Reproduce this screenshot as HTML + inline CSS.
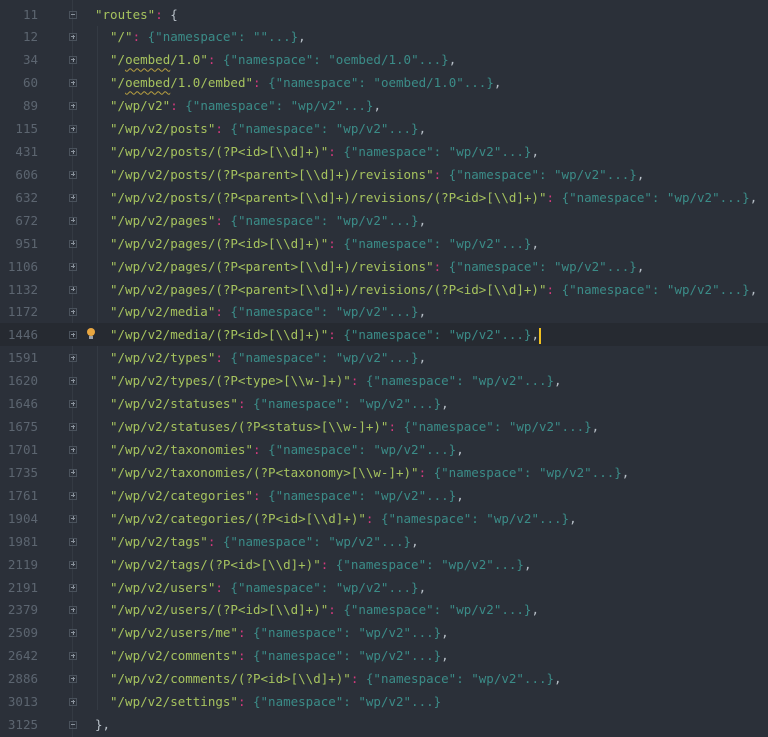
<!DOCTYPE html>
<html><head><meta charset="utf-8"><style>
html,body{margin:0;padding:0;background:#2b3039;width:768px;height:737px;overflow:hidden}
body{position:relative;font-family:"DejaVu Sans Mono","Liberation Mono",monospace;font-size:12.5px}
#w{position:absolute;left:0;top:2.5px;width:768px}
.l{position:relative;width:768px;height:22.935px;line-height:23px;white-space:pre}
.cur{background:#262a31}
.n{position:absolute;left:0;width:38px;text-align:right;color:#5c6570}
.f{position:absolute;left:69px;top:8px;width:8px;height:8px;border:1px solid #4a525c;box-sizing:border-box}
.f:before{content:"";position:absolute;left:1px;top:2px;width:4px;height:1px;background:#8a929c}
.f:after{content:"";position:absolute;left:2.5px;top:0.5px;width:1px;height:4px;background:#8a929c}
.m:after{display:none}
.t{position:absolute;left:110px;color:#a6c35e}
.s{color:#a6c35e}.c{color:#d1397c}.g{color:#3b8c88}.p{color:#b8c0c8}
.guide{position:absolute;left:97px;top:26px;width:1px;height:684px;background:#343a43}
.vg{position:absolute;left:72px;top:0;width:1px;height:737px;background:#343a43}
u{text-decoration:underline wavy #b8a040;text-underline-offset:3px;text-decoration-thickness:1px}
</style></head><body>
<div class="vg"></div>
<div class="guide"></div>
<div id="w">
<div class="l"><span class="n">11</span><span class="f m"></span><span class="t" style="left:95px"><span class="s">"routes"</span><span class="c">:</span> <span class="p">{</span></span></div>
<div class="l"><span class="n">12</span><span class="f"></span><span class="t">"/"<span class="c">:</span> <span class="g">{"namespace": ""...}</span><span class="p">,</span></span></div>
<div class="l"><span class="n">34</span><span class="f"></span><span class="t">"/<u>oembed</u>/1.0"<span class="c">:</span> <span class="g">{"namespace": "oembed/1.0"...}</span><span class="p">,</span></span></div>
<div class="l"><span class="n">60</span><span class="f"></span><span class="t">"/<u>oembed</u>/1.0/embed"<span class="c">:</span> <span class="g">{"namespace": "oembed/1.0"...}</span><span class="p">,</span></span></div>
<div class="l"><span class="n">89</span><span class="f"></span><span class="t">"/wp/v2"<span class="c">:</span> <span class="g">{"namespace": "wp/v2"...}</span><span class="p">,</span></span></div>
<div class="l"><span class="n">115</span><span class="f"></span><span class="t">"/wp/v2/posts"<span class="c">:</span> <span class="g">{"namespace": "wp/v2"...}</span><span class="p">,</span></span></div>
<div class="l"><span class="n">431</span><span class="f"></span><span class="t">"/wp/v2/posts/(?P&lt;id&gt;[\\d]+)"<span class="c">:</span> <span class="g">{"namespace": "wp/v2"...}</span><span class="p">,</span></span></div>
<div class="l"><span class="n">606</span><span class="f"></span><span class="t">"/wp/v2/posts/(?P&lt;parent&gt;[\\d]+)/revisions"<span class="c">:</span> <span class="g">{"namespace": "wp/v2"...}</span><span class="p">,</span></span></div>
<div class="l"><span class="n">632</span><span class="f"></span><span class="t">"/wp/v2/posts/(?P&lt;parent&gt;[\\d]+)/revisions/(?P&lt;id&gt;[\\d]+)"<span class="c">:</span> <span class="g">{"namespace": "wp/v2"...}</span><span class="p">,</span></span></div>
<div class="l"><span class="n">672</span><span class="f"></span><span class="t">"/wp/v2/pages"<span class="c">:</span> <span class="g">{"namespace": "wp/v2"...}</span><span class="p">,</span></span></div>
<div class="l"><span class="n">951</span><span class="f"></span><span class="t">"/wp/v2/pages/(?P&lt;id&gt;[\\d]+)"<span class="c">:</span> <span class="g">{"namespace": "wp/v2"...}</span><span class="p">,</span></span></div>
<div class="l"><span class="n">1106</span><span class="f"></span><span class="t">"/wp/v2/pages/(?P&lt;parent&gt;[\\d]+)/revisions"<span class="c">:</span> <span class="g">{"namespace": "wp/v2"...}</span><span class="p">,</span></span></div>
<div class="l"><span class="n">1132</span><span class="f"></span><span class="t">"/wp/v2/pages/(?P&lt;parent&gt;[\\d]+)/revisions/(?P&lt;id&gt;[\\d]+)"<span class="c">:</span> <span class="g">{"namespace": "wp/v2"...}</span><span class="p">,</span></span></div>
<div class="l"><span class="n">1172</span><span class="f"></span><span class="t">"/wp/v2/media"<span class="c">:</span> <span class="g">{"namespace": "wp/v2"...}</span><span class="p">,</span></span></div>
<div class="l cur"><span class="n">1446</span><span class="f"></span><span style="position:absolute;left:87px;top:5px;width:8px;height:8px;border-radius:50%;background:#e8a640"></span><span style="position:absolute;left:89px;top:13px;width:4px;height:3px;background:#9aa0a8"></span><span class="t">"/wp/v2/media/(?P&lt;id&gt;[\\d]+)"<span class="c">:</span> <span class="g">{"namespace": "wp/v2"...}</span><span class="p">,</span><span style="display:inline-block;width:2px;height:16px;background:#f0c020;vertical-align:middle"></span></span></div>
<div class="l"><span class="n">1591</span><span class="f"></span><span class="t">"/wp/v2/types"<span class="c">:</span> <span class="g">{"namespace": "wp/v2"...}</span><span class="p">,</span></span></div>
<div class="l"><span class="n">1620</span><span class="f"></span><span class="t">"/wp/v2/types/(?P&lt;type&gt;[\\w-]+)"<span class="c">:</span> <span class="g">{"namespace": "wp/v2"...}</span><span class="p">,</span></span></div>
<div class="l"><span class="n">1646</span><span class="f"></span><span class="t">"/wp/v2/statuses"<span class="c">:</span> <span class="g">{"namespace": "wp/v2"...}</span><span class="p">,</span></span></div>
<div class="l"><span class="n">1675</span><span class="f"></span><span class="t">"/wp/v2/statuses/(?P&lt;status&gt;[\\w-]+)"<span class="c">:</span> <span class="g">{"namespace": "wp/v2"...}</span><span class="p">,</span></span></div>
<div class="l"><span class="n">1701</span><span class="f"></span><span class="t">"/wp/v2/taxonomies"<span class="c">:</span> <span class="g">{"namespace": "wp/v2"...}</span><span class="p">,</span></span></div>
<div class="l"><span class="n">1735</span><span class="f"></span><span class="t">"/wp/v2/taxonomies/(?P&lt;taxonomy&gt;[\\w-]+)"<span class="c">:</span> <span class="g">{"namespace": "wp/v2"...}</span><span class="p">,</span></span></div>
<div class="l"><span class="n">1761</span><span class="f"></span><span class="t">"/wp/v2/categories"<span class="c">:</span> <span class="g">{"namespace": "wp/v2"...}</span><span class="p">,</span></span></div>
<div class="l"><span class="n">1904</span><span class="f"></span><span class="t">"/wp/v2/categories/(?P&lt;id&gt;[\\d]+)"<span class="c">:</span> <span class="g">{"namespace": "wp/v2"...}</span><span class="p">,</span></span></div>
<div class="l"><span class="n">1981</span><span class="f"></span><span class="t">"/wp/v2/tags"<span class="c">:</span> <span class="g">{"namespace": "wp/v2"...}</span><span class="p">,</span></span></div>
<div class="l"><span class="n">2119</span><span class="f"></span><span class="t">"/wp/v2/tags/(?P&lt;id&gt;[\\d]+)"<span class="c">:</span> <span class="g">{"namespace": "wp/v2"...}</span><span class="p">,</span></span></div>
<div class="l"><span class="n">2191</span><span class="f"></span><span class="t">"/wp/v2/users"<span class="c">:</span> <span class="g">{"namespace": "wp/v2"...}</span><span class="p">,</span></span></div>
<div class="l"><span class="n">2379</span><span class="f"></span><span class="t">"/wp/v2/users/(?P&lt;id&gt;[\\d]+)"<span class="c">:</span> <span class="g">{"namespace": "wp/v2"...}</span><span class="p">,</span></span></div>
<div class="l"><span class="n">2509</span><span class="f"></span><span class="t">"/wp/v2/users/me"<span class="c">:</span> <span class="g">{"namespace": "wp/v2"...}</span><span class="p">,</span></span></div>
<div class="l"><span class="n">2642</span><span class="f"></span><span class="t">"/wp/v2/comments"<span class="c">:</span> <span class="g">{"namespace": "wp/v2"...}</span><span class="p">,</span></span></div>
<div class="l"><span class="n">2886</span><span class="f"></span><span class="t">"/wp/v2/comments/(?P&lt;id&gt;[\\d]+)"<span class="c">:</span> <span class="g">{"namespace": "wp/v2"...}</span><span class="p">,</span></span></div>
<div class="l"><span class="n">3013</span><span class="f"></span><span class="t">"/wp/v2/settings"<span class="c">:</span> <span class="g">{"namespace": "wp/v2"...}</span></span></div>
<div class="l"><span class="n">3125</span><span class="f m"></span><span class="t" style="left:95px"><span class="p">},</span></span></div>
</div>
</body></html>
